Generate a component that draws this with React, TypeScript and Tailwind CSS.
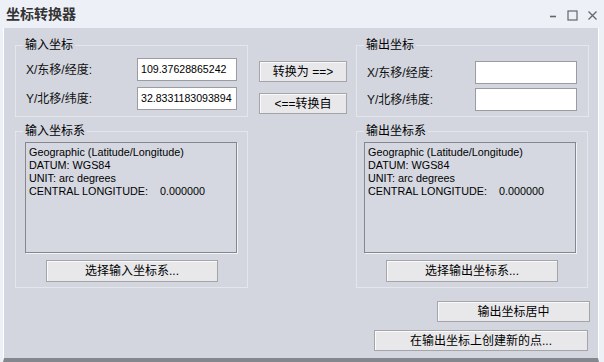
import React from "react";

const FONT = "font-['Liberation_Sans','Noto_Sans_CJK_SC',sans-serif]";

function Group({
  title,
  className,
  children,
}: {
  title: string;
  className: string;
  children: React.ReactNode;
}) {
  return (
    <div className={`relative border border-[#e4e6ec] ${className}`}>
      <span className="absolute -top-[8px] left-[7px] bg-[#d3d6df] px-[2px] text-[12px] leading-[14px] text-black">
        {title}
      </span>
      {children}
    </div>
  );
}

function Field({
  label,
  value,
  labelW,
  inputW,
}: {
  label: string;
  value?: string;
  labelW: string;
  inputW: string;
}) {
  return (
    <div className="flex items-center">
      <span className={`${labelW} text-[12px] leading-[14px] text-[#111]`}>{label}</span>
      <div
        className={`${inputW} h-[23px] overflow-hidden whitespace-nowrap border border-[#9a9ca2] bg-white pl-[3px] text-[10.6px] leading-[21px] text-black`}
      >
        {value}
      </div>
    </div>
  );
}

function Btn({ label, className }: { label: string; className: string }) {
  return (
    <button
      type="button"
      className={`flex items-center justify-center border border-[#a4a5a9] bg-[#e8e8ea] text-[12px] leading-[14px] text-black shadow-[inset_1px_1px_0_#fafafa] ${className}`}
    >
      {label}
    </button>
  );
}

function SysBox() {
  return (
    <div className="h-[111px] w-[212px] border border-[#85878d] bg-[#d5d8e0] px-[3px] pt-[3px] text-[10.8px] leading-[13px] text-black shadow-[1px_1px_0_#f2f3f6]">
      <div>Geographic (Latitude/Longitude)</div>
      <div>DATUM: WGS84</div>
      <div>UNIT: arc degrees</div>
      <div>
        CENTRAL LONGITUDE:<span className="ml-[12px]">0.000000</span>
      </div>
    </div>
  );
}

export default function App() {
  return (
    <div className={`flex h-[362px] w-[604px] flex-col bg-[#eef0f8] ${FONT}`}>
      {/* Title bar */}
      <div className="flex h-[28px] items-center justify-between pl-[6px] pr-[6px]">
        <span className="text-[14px] font-bold leading-[16px] text-[#333]">坐标转换器</span>
        <div className="flex items-center gap-[9px] pt-[2px] text-[#666]">
          <svg width="10" height="10" viewBox="0 0 10 10">
            <path d="M2 6.5h6" stroke="#666" strokeWidth="1.6" />
          </svg>
          <svg width="11" height="11" viewBox="0 0 11 11">
            <rect x="1" y="1" width="9" height="9" fill="none" stroke="#666" strokeWidth="1.2" />
          </svg>
          <svg width="11" height="11" viewBox="0 0 11 11">
            <path d="M1.5 1.5l8 8M9.5 1.5l-8 8" stroke="#666" strokeWidth="1.3" />
          </svg>
        </div>
      </div>

      {/* Body */}
      <div className="ml-[3px] mr-[5px] flex flex-1 flex-col border-b-[4px] border-l border-r border-b-[#85878e] border-l-white border-r-white bg-[#d3d6df] pl-[11px] pt-[17px]">
        {/* Row 1 */}
        <div className="flex">
          <Group title="输入坐标" className="h-[72px] w-[233px] pl-[10px] pt-[12px]">
            <div className="flex flex-col gap-[6px]">
              <Field label="X/东移/经度:" value="109.37628865242" labelW="w-[111px]" inputW="w-[100px]" />
              <Field label="Y/北移/纬度:" value="32.8331183093894" labelW="w-[111px]" inputW="w-[100px]" />
            </div>
          </Group>
          <div className="ml-[11px] flex w-[88px] flex-col gap-[11px] pt-[16px]">
            <Btn label="转换为 ==>" className="h-[21px] w-[88px]" />
            <Btn label="<==转换自" className="h-[21px] w-[88px]" />
          </div>
          <Group title="输出坐标" className="ml-[9px] h-[72px] w-[233px] pl-[10px] pt-[15px]">
            <div className="flex flex-col gap-[4px]">
              <Field label="X/东移/经度:" labelW="w-[108px]" inputW="w-[102px]" />
              <Field label="Y/北移/纬度:" labelW="w-[108px]" inputW="w-[102px]" />
            </div>
          </Group>
        </div>

        {/* Row 2 */}
        <div className="mt-[14px] flex">
          <Group title="输入坐标系" className="flex h-[157px] w-[233px] flex-col pl-[9px] pt-[10px]">
            <SysBox />
            <Btn label="选择输入坐标系..." className="ml-[21px] mt-[7px] h-[22px] w-[172px]" />
          </Group>
          <Group title="输出坐标系" className="ml-[108px] flex h-[157px] w-[232px] flex-col pl-[7px] pt-[10px]">
            <SysBox />
            <Btn label="选择输出坐标系..." className="ml-[22px] mt-[7px] h-[22px] w-[172px]" />
          </Group>
        </div>

        {/* Row 3 */}
        <div className="flex flex-col items-end pr-[8px]">
          <Btn label="输出坐标居中" className="mt-[13px] h-[21px] w-[153px]" />
          <Btn label="在输出坐标上创建新的点..." className="mr-[2px] mt-[8px] h-[21px] w-[214px]" />
        </div>
      </div>
    </div>
  );
}
